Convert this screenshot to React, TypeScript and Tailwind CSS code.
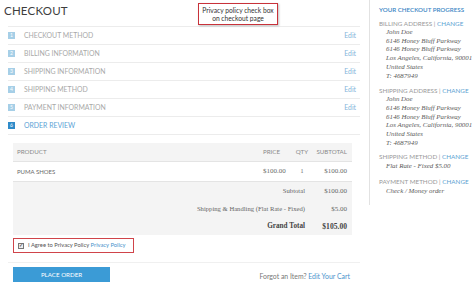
import React from "react";

const sans = "font-['Lato','Liberation_Sans',sans-serif]";
const serif = "font-['Liberation_Serif','DejaVu_Serif',serif]";

const STEPS = [
  { n: 1, label: "CHECKOUT METHOD", edit: true },
  { n: 2, label: "BILLING INFORMATION", edit: true },
  { n: 3, label: "SHIPPING INFORMATION", edit: true },
  { n: 4, label: "SHIPPING METHOD", edit: true },
  { n: 5, label: "PAYMENT INFORMATION", edit: true },
  { n: 6, label: "ORDER REVIEW", edit: false },
];

const ADDRESS = [
  "John Doe",
  "6146 Honey Bluff Parkway",
  "6146 Honey Bluff Parkway",
  "Los Angeles, California, 90001",
  "United States",
  "T: 4687949",
];

const SideHeading = ({ title }: { title: string }) => (
  <div className="whitespace-nowrap text-[6.3px] leading-[9px] text-[#999]">
    {title} | <span className="text-[#5b9fd1]">CHANGE</span>
  </div>
);

const SideLines = ({ lines }: { lines: string[] }) => (
  <div className={`${serif} italic whitespace-nowrap text-[6.9px] leading-[8.7px] text-[#5a5a5a] pl-[7px]`}>
    {lines.map((l, i) => (
      <div key={i}>{l}</div>
    ))}
  </div>
);

export default function App() {
  return (
    <div className={`${sans} relative w-[474px] h-[287px] bg-white overflow-hidden flex`}>
      {/* main column */}
      <div className="w-[369px] shrink-0">
        <div className="h-[26px] pl-[4px] pt-[4px] text-[11.5px] leading-[14px] text-[#3d3d3d] tracking-[0.2px]">
          CHECKOUT
        </div>

        <div className="ml-[8px] w-[352px] border-b border-[#ececec]">
          {STEPS.map((s) => (
            <div
              key={s.n}
              className="h-[18px] border-t border-[#ececec] flex items-center pr-[4px]"
            >
              <span
                className={`w-[7px] h-[7px] flex items-center justify-center text-[5px] leading-none text-white ${
                  s.edit ? "bg-[#a6cfe7]" : "bg-[#2f8bc9]"
                }`}
              >
                {s.n}
              </span>
              <span
                className={`ml-[9px] text-[6.9px] leading-none ${
                  s.edit ? "text-[#a9a9a9]" : "text-[#5aa2d5]"
                }`}
              >
                {s.label}
              </span>
              {s.edit && (
                <span className="ml-auto text-[6.8px] leading-none text-[#82b5da]">Edit</span>
              )}
            </div>
          ))}
        </div>

        {/* order table */}
        <div className="ml-[13px] mt-[8px] w-[339px]">
          <div className="h-[19px] bg-[#f4f4f4] border-b border-[#e4e4e4] flex items-center text-[6.2px] text-[#8a8a8a]">
            <div className="w-[250px] pl-[4px]">PRODUCT</div>
            <div className="w-[27px]">PRICE</div>
            <div className="w-[24px] text-center">QTY</div>
            <div className="flex-1 text-right pr-[5px]">SUBTOTAL</div>
          </div>
          <div className="h-[20px] border-b border-[#e4e4e4] flex items-center text-[6px] text-[#6a6a6a]">
            <div className="w-[250px] pl-[4px]">PUMA SHOES</div>
            <div className={`${serif} w-[27px] text-[7px]`}>$100.00</div>
            <div className={`${serif} w-[24px] text-center text-[6px]`}>1</div>
            <div className={`${serif} flex-1 text-right pr-[5px] text-[7px]`}>$100.00</div>
          </div>
          <div className={`${serif} bg-[#f4f4f4] text-[6.65px] text-[#666]`}>
            <div className="h-[18px] flex items-center">
              <div className="flex-1 text-right pr-[6px]">Subtotal</div>
              <div className="w-[41px] text-right pr-[5px] text-[7px]">$100.00</div>
            </div>
            <div className="h-[18px] flex items-center">
              <div className="flex-1 text-right pr-[6px]">Shipping &amp; Handling (Flat Rate - Fixed)</div>
              <div className="w-[41px] text-right pr-[5px] text-[7px]">$5.00</div>
            </div>
            <div className="h-[17px] flex items-center font-bold text-[#444]">
              <div className="flex-1 text-right pr-[6px] text-[7.2px]">Grand Total</div>
              <div className="w-[41px] text-right pr-[5px] text-[7.6px]">$105.00</div>
            </div>
          </div>

          <div className="mt-[3px] w-[121px] h-[15px] border-[1.5px] border-[#d0444a] flex items-center pl-[4px] whitespace-nowrap text-[5.8px] text-[#555]">
            <span className="w-[6px] h-[6px] shrink-0 border border-[#777] bg-[#eee] flex items-center justify-center text-[5px] leading-none text-[#222]">
              ✓
            </span>
            <span className="ml-[4px]">
              I Agree to Privacy Policy <span className="text-[#4a93cc]">Privacy Policy</span>
            </span>
          </div>
        </div>

        <div className="ml-[8px] w-[352px] mt-[9px] border-t border-[#f0f0f0] flex items-center pt-[4px]">
          <div className="ml-[5px] w-[97px] h-[15px] bg-[#3b9bd6] flex items-center justify-center text-[6.2px] text-white">
            PLACE ORDER
          </div>
          <div className="ml-auto mr-[10px] mt-[3px] whitespace-nowrap text-[6.9px] text-[#777]">
            Forgot an Item? <span className="text-[#4a93cc]">Edit Your Cart</span>
          </div>
        </div>
      </div>

      {/* sidebar */}
      <div className="self-start w-[105px] h-[205px] border-l border-[#e2e2e2] pl-[9px] pt-[5px]">
        <div className="whitespace-nowrap text-[6.2px] leading-[10px] font-semibold text-[#3a86c4]">
          YOUR CHECKOUT PROGRESS
        </div>
        <div className="mt-[4px]">
          <SideHeading title="BILLING ADDRESS" />
          <SideLines lines={ADDRESS} />
        </div>
        <div className="mt-[6px]">
          <SideHeading title="SHIPPING ADDRESS" />
          <SideLines lines={ADDRESS} />
        </div>
        <div className="mt-[5px]">
          <SideHeading title="SHIPPING METHOD" />
          <div className="mt-[1px]">
            <SideLines lines={["Flat Rate - Fixed $5.00"]} />
          </div>
        </div>
        <div className="mt-[6px]">
          <SideHeading title="PAYMENT METHOD" />
          <div className="mt-[1px]">
            <SideLines lines={["Check / Money order"]} />
          </div>
        </div>
      </div>

      {/* annotation callout */}
      <div className="absolute left-[198px] top-[3px] w-[80px] h-[22px] bg-white border border-[#c8323a] shadow-[1px_1px_2px_rgba(0,0,0,0.25)] flex flex-col items-center justify-center whitespace-nowrap text-[6.7px] leading-[8px] text-[#333]">
        <div>Privacy policy check box</div>
        <div>on checkout page</div>
      </div>
    </div>
  );
}
